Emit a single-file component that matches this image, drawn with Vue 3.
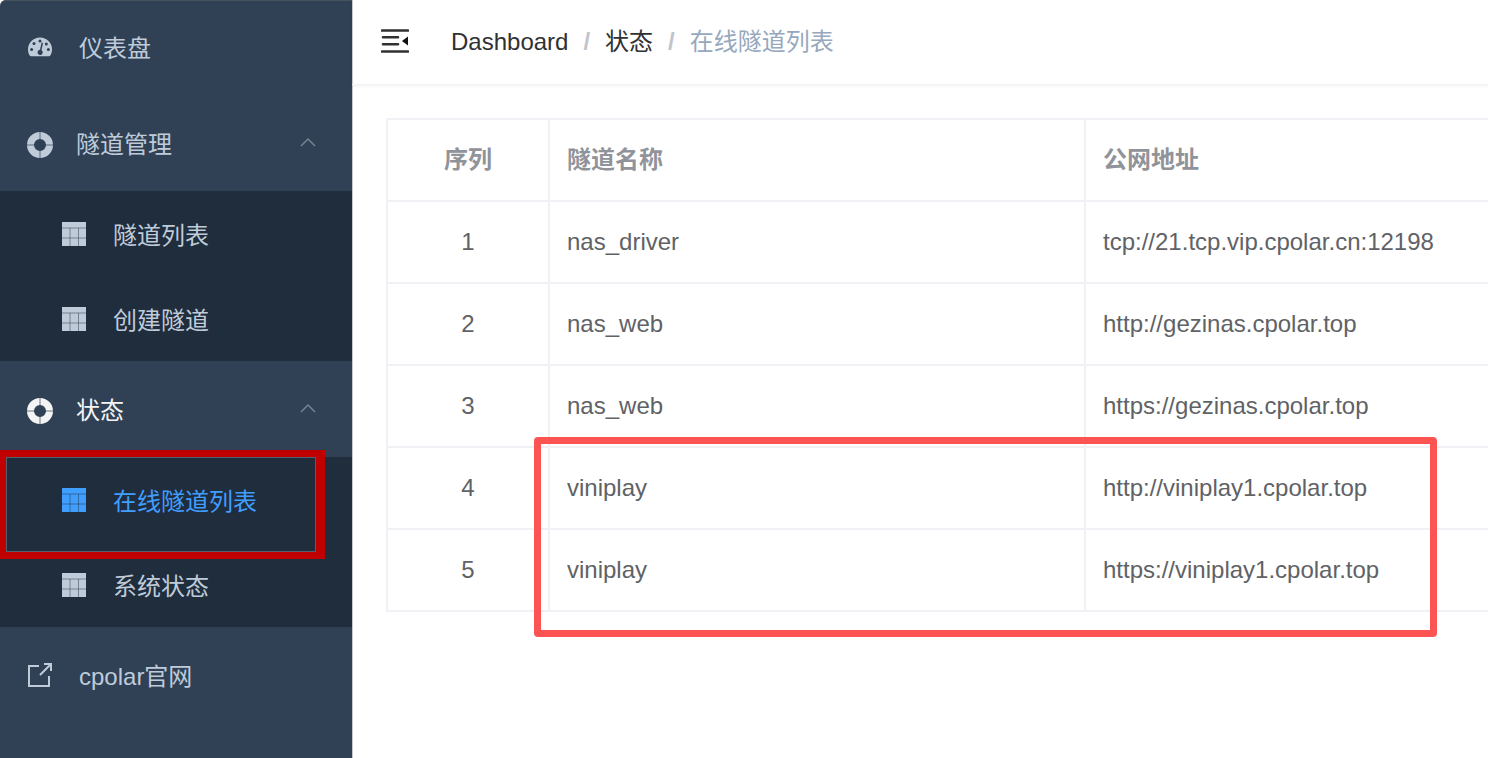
<script setup>
import { ref } from 'vue'

const current = ref('在线隧道列表')

const groups = ref([
  { title: '隧道管理', open: true, children: ['隧道列表', '创建隧道'] },
  { title: '状态', open: true, children: ['在线隧道列表', '系统状态'] }
])

const tunnels = [
  { id: 1, name: 'nas_driver', url: 'tcp://21.tcp.vip.cpolar.cn:12198' },
  { id: 2, name: 'nas_web', url: 'http://gezinas.cpolar.top' },
  { id: 3, name: 'nas_web', url: 'https://gezinas.cpolar.top' },
  { id: 4, name: 'viniplay', url: 'http://viniplay1.cpolar.top' },
  { id: 5, name: 'viniplay', url: 'https://viniplay1.cpolar.top' }
]
</script>

<template>
  <div class="app">
    <aside class="sidebar">
      <nav class="menu">
        <a href="#" class="item" @click.prevent="current = '仪表盘'">
          <svg class="icon" viewBox="0 0 24 24">
            <path fill="currentColor" d="M12 2.500A12 12 0 0 0 0 14.500c0 2.200.6 4.300 1.700 6 .3.500.8.800 1.300.800h18c.5 0 1-.3 1.300-.8 1.100-1.700 1.700-3.800 1.700-6a12 12 0 0 0-12-12z" />
            <g class="hole">
              <circle cx="12" cy="6" r="1.500" />
              <circle cx="6" cy="8.500" r="1.500" />
              <circle cx="3.600" cy="14.500" r="1.500" />
              <circle cx="20.400" cy="14.500" r="1.500" />
              <circle cx="18.300" cy="9" r="1.500" />
              <path d="M13.600 7.500l1.400.4-1.500 7.300a2.600 2.600 0 1 1-1.500-.4z" />
            </g>
          </svg>
          <span>仪表盘</span>
        </a>

        <div v-for="group in groups" :key="group.title">
          <button
            type="button"
            class="title"
            :class="{ active: group.children.includes(current) }"
            :aria-expanded="group.open"
            @click="group.open = !group.open"
          >
            <svg class="ring" viewBox="0 0 26 26">
              <circle cx="13" cy="13" r="9.500" fill="none" stroke="currentColor" stroke-width="7" />
              <path d="M13 0v8M13 18v8M0 13h8M18 13h8" fill="none" stroke="#304156" stroke-opacity="0.700" stroke-width="1" />
            </svg>
            <span>{{ group.title }}</span>
            <svg class="arrow" :class="{ closed: !group.open }" viewBox="0 0 16 10">
              <path d="M1 9l7-7 7 7" fill="none" stroke="#76828f" stroke-width="1.500" />
            </svg>
          </button>
          <ul v-if="group.open" class="sub">
            <li v-for="name in group.children" :key="name">
              <a href="#" class="sub-item" :class="{ current: name === current }" @click.prevent="current = name">
                <svg class="icon" viewBox="0 0 24 24">
                  <path fill="currentColor" d="M0 0h24v24H0z" />
                  <path d="M0 6h24M0 16h24M8 6v18M16.500 6v18" fill="none" stroke="#1f2d3d" stroke-opacity="0.450" stroke-width="1" />
                </svg>
                <span>{{ name }}</span>
              </a>
              <div v-if="name === '在线隧道列表'" class="mark-menu"></div>
            </li>
          </ul>
        </div>

        <a href="#" class="item">
          <svg class="icon" viewBox="0 0 24 24" fill="none" stroke="currentColor" stroke-width="2">
            <path d="M11 3H1v20h20V13M12 12L22 2M16 1h7v7" />
          </svg>
          <span>cpolar官网</span>
        </a>
      </nav>
    </aside>

    <div class="content">
      <header class="navbar">
        <button type="button" class="fold" aria-label="菜单">
          <svg viewBox="0 0 28 26">
            <path d="M1 1.500h26M2 8.300h15M2 15.200h15M1 22.500h26" stroke="#303133" stroke-width="2.600" stroke-linecap="round" />
            <path d="M27 7.500v9l-6-4.500z" fill="#111" />
          </svg>
        </button>
        <nav class="breadcrumb">
          <a href="#">Dashboard</a>
          <b>/</b>
          <a href="#">状态</a>
          <b>/</b>
          <span>在线隧道列表</span>
        </nav>
      </header>

      <main class="main">
        <div class="table-wrap">
          <table>
            <colgroup>
              <col class="col-index">
              <col class="col-name">
              <col>
            </colgroup>
            <thead>
              <tr>
                <th class="center">序列</th>
                <th>隧道名称</th>
                <th>公网地址</th>
              </tr>
            </thead>
            <tbody>
              <tr v-for="tunnel in tunnels" :key="tunnel.id">
                <td class="center">{{ tunnel.id }}</td>
                <td>{{ tunnel.name }}</td>
                <td>{{ tunnel.url }}</td>
              </tr>
            </tbody>
          </table>
          <div class="mark-rows"></div>
        </div>
      </main>
    </div>
  </div>
</template>

<style>
body {
  margin: 0;
  background: #fff;
}
</style>

<style scoped>
.app {
  display: flex;
  min-height: 100vh;
  font-family: "Liberation Sans", "Noto Sans CJK SC", sans-serif;
  font-size: 24px;
  line-height: 32px;
  overflow: hidden;
}

a {
  color: inherit;
  text-decoration: none;
}

button {
  border: none;
  background: none;
  font: inherit;
  color: inherit;
  cursor: pointer;
}

svg {
  display: block;
  flex: none;
}

.sidebar {
  flex: none;
  width: 352px;
  background: #304156;
  color: #bfcbd9;
  border-top-left-radius: 6px;
  box-shadow: inset 0 1px #48525c, 1px 0 #c4c8cd;
}

.menu {
  margin-top: -1px;
}

.item,
.title,
.sub-item {
  display: flex;
  align-items: center;
  box-sizing: border-box;
  width: 100%;
}

.item {
  height: 96px;
  gap: 27px;
  padding: 0 28px;
}

.item span,
.sub-item span {
  padding-top: 4px;
}

.title {
  position: relative;
  height: 96px;
  gap: 23px;
  padding: 4px 27px 0;
}

.title.active {
  color: #f4f4f5;
}

.icon {
  width: 24px;
  height: 24px;
}

.ring {
  width: 26px;
  height: 26px;
}

.hole {
  fill: #304156;
}

.arrow {
  position: absolute;
  top: 42px;
  right: 36px;
  width: 16px;
  height: 10px;
}

.arrow.closed {
  transform: rotate(180deg);
}

.sub {
  list-style: none;
  margin: 0;
  padding: 0;
  background: #1f2d3d;
}

.sub li {
  position: relative;
}

.sub-item {
  height: 85px;
  gap: 27px;
  padding: 0 62px;
}

.sub-item.current {
  color: #409eff;
}

.mark-menu {
  position: absolute;
  z-index: 1;
  top: -7px;
  left: 0;
  box-sizing: border-box;
  width: 325px;
  height: 109px;
  border: 7px solid #c00000;
  border-left-width: 6px;
  border-right-width: 9px;
  box-shadow: inset 0 0 0 1px #53606e;
  pointer-events: none;
}

.content {
  flex: 1;
  min-width: 0;
}

.navbar {
  display: flex;
  align-items: center;
  gap: 42px;
  height: 84px;
  padding-left: 29px;
  border-bottom: 1px solid #f2f3f5;
  box-shadow: 0 1px 4px rgba(0, 21, 41, 0.06);
}

.fold {
  padding: 0;
}

.fold svg {
  width: 28px;
  height: 26px;
}

.breadcrumb {
  display: flex;
  gap: 15px;
  color: #303133;
}

.breadcrumb b {
  color: #c0c4cc;
}

.breadcrumb span {
  color: #97a8be;
}

.main {
  padding: 33px 0 0 34px;
}

.table-wrap {
  position: relative;
}

table {
  width: 100%;
  table-layout: fixed;
  border-collapse: separate;
  border-spacing: 0;
  border-top: 2px solid #eff1f5;
  border-left: 2px solid #eff1f5;
  color: #606266;
}

.col-index {
  width: 162px;
}

.col-name {
  width: 536px;
}

th,
td {
  box-sizing: border-box;
  height: 82px;
  padding: 0 17px;
  border-bottom: 2px solid #eff1f5;
  border-right: 2px solid #eff1f5;
  text-align: left;
  white-space: nowrap;
}

th:last-child,
td:last-child {
  border-right: none;
}

th {
  color: #909399;
}

.center {
  text-align: center;
}

.mark-rows {
  position: absolute;
  top: 319px;
  left: 148px;
  box-sizing: border-box;
  width: 903px;
  height: 200px;
  border: 7px solid #fc5353;
  border-radius: 4px;
}
</style>
